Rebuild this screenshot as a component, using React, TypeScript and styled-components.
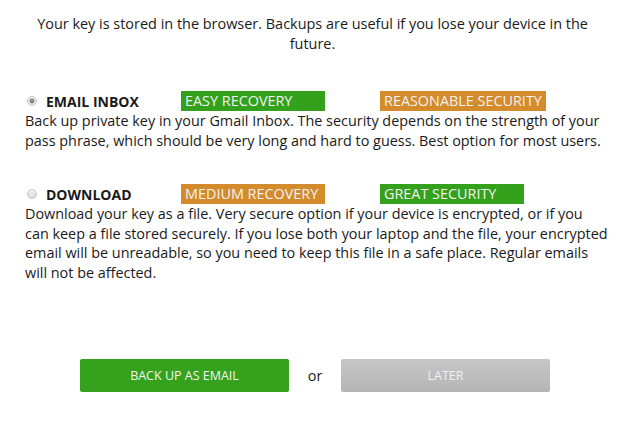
import React from "react";
import styled, { createGlobalStyle } from "styled-components";

const Global = createGlobalStyle`
  html, body { margin: 0; padding: 0; background: #fff; }
  body { font-family: "Open Sans", "Liberation Sans", sans-serif; color: #1a1a1a; }
`;

const Page = styled.div`
  width: 630px;
  box-sizing: border-box;
  padding: 14px 20px 0 25px;
`;

const Intro = styled.p`
  margin: 0 -20px 0 -25px;
  padding: 0 30px 0 25px;
  text-align: center;
  font-size: 14.45px;
  line-height: 19.5px;
`;

const Option = styled.section<{ $top: number }>`
  margin-top: ${(p) => p.$top}px;
`;

const Header = styled.label`
  display: flex;
  align-items: center;
  height: 20px;
`;

const LabelCol = styled.span`
  display: flex;
  align-items: center;
  width: 156px;
  flex: none;
`;

const Radio = styled.span<{ $checked: boolean }>`
  box-sizing: border-box;
  width: 10px;
  height: 10px;
  border-radius: 50%;
  margin-left: 2px;
  margin-right: 9px;
  border: 1px solid #c2c2c2;
  background: ${(p) =>
    p.$checked
      ? "radial-gradient(circle, #8a8a8a 0 2.2px, #e9e9e9 2.8px)"
      : "linear-gradient(#f4f4f4, #d9d9d9)"};
`;

const Title = styled.span`
  font-weight: 700;
  font-size: 14px;
`;

const BadgeCol = styled.span`
  width: 199px;
  flex: none;
  display: flex;
`;

const Badge = styled.span<{ $tone: "green" | "orange" }>`
  box-sizing: border-box;
  min-width: 144px;
  height: 20px;
  line-height: 20px;
  padding: 0 4px;
  font-size: 14.4px;
  color: #f2f2f2;
  white-space: nowrap;
  background: ${(p) => (p.$tone === "green" ? "#33a11b" : "#d48b2b")};
`;

const Desc = styled.p`
  margin: 0;
  font-size: 14.4px;
  line-height: 19.5px;
`;

const Actions = styled.div`
  display: flex;
  justify-content: center;
  align-items: center;
  margin-top: 77px;
  margin-left: -25px;
  margin-right: -20px;
`;

const Button = styled.button<{ $primary?: boolean }>`
  width: 209px;
  height: 33px;
  border: none;
  border-radius: 2px;
  font-family: "Open Sans", "Liberation Sans", sans-serif;
  font-size: 12.5px;
  color: ${(p) => (p.$primary ? "#f4f4f4" : "#f0f0f0")};
  background: ${(p) =>
    p.$primary ? "#34a21c" : "linear-gradient(#c6c6c6, #b5b5b5)"};
  cursor: pointer;
  padding: 0;
`;

const Or = styled.span`
  width: 52px;
  text-align: center;
  font-size: 14.4px;
`;

export default function App() {
  return (
    <>
      <Global />
      <Page>
        <Intro>
          Your key is stored in the browser. Backups are useful if you lose your
          device in the future.
        </Intro>

        <Option $top={38}>
          <Header>
            <LabelCol>
              <Radio $checked />
              <Title>EMAIL INBOX</Title>
            </LabelCol>
            <BadgeCol>
              <Badge $tone="green">EASY RECOVERY</Badge>
            </BadgeCol>
            <BadgeCol>
              <Badge $tone="orange">REASONABLE SECURITY</Badge>
            </BadgeCol>
          </Header>
          <Desc>
            Back up private key in your Gmail Inbox. The security depends on the
            strength of your pass phrase, which should be very long and hard to
            guess. Best option for most users.
          </Desc>
        </Option>

        <Option $top={34}>
          <Header>
            <LabelCol>
              <Radio $checked={false} />
              <Title>DOWNLOAD</Title>
            </LabelCol>
            <BadgeCol>
              <Badge $tone="orange">MEDIUM RECOVERY</Badge>
            </BadgeCol>
            <BadgeCol>
              <Badge $tone="green">GREAT SECURITY</Badge>
            </BadgeCol>
          </Header>
          <Desc>
            Download your key as a file. Very secure option if your device is
            encrypted, or if you can keep a file stored securely. If you lose
            both your laptop and the file, your encrypted email will be
            unreadable, so you need to keep this file in a safe place. Regular
            emails will not be affected.
          </Desc>
        </Option>

        <Actions>
          <Button $primary>BACK UP AS EMAIL</Button>
          <Or>or</Or>
          <Button>LATER</Button>
        </Actions>
      </Page>
    </>
  );
}
